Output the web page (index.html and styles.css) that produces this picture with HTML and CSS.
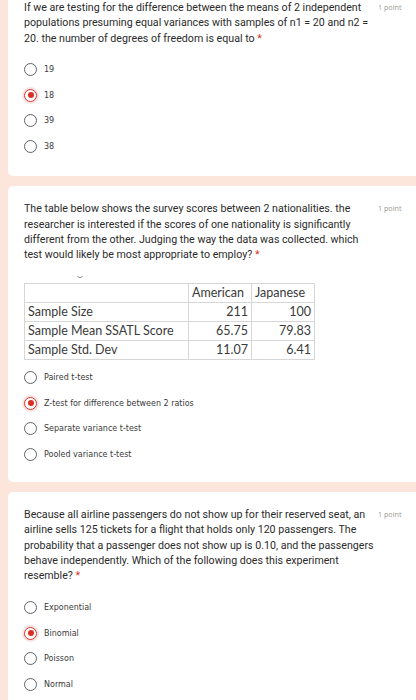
FILE: index.html
```html
<!DOCTYPE html>
<html lang="en">
<head>
<meta charset="utf-8">
<title>Quiz</title>
<link rel="stylesheet" href="styles.css">
</head>
<body>
<div class="page">
  <section class="card card-top">
    <div class="q-head">
      <p class="q-title">If we are testing for the difference between the means of 2 independent populations presuming equal variances with samples of n1 = 20 and n2 = 20. the number of degrees of freedom is equal to <span class="req">*</span></p>
      <span class="pts">1 point</span>
    </div>
    <ul class="opts">
      <li class="opt"><span class="radio"></span><span class="lbl">19</span></li>
      <li class="opt"><span class="radio on"></span><span class="lbl">18</span></li>
      <li class="opt"><span class="radio"></span><span class="lbl">39</span></li>
      <li class="opt"><span class="radio"></span><span class="lbl">38</span></li>
    </ul>
  </section>

  <section class="card">
    <div class="q-head">
      <p class="q-title">The table below shows the survey scores between 2 nationalities. the researcher is interested if the scores of one nationality is significantly different from the other. Judging the way the data was collected. which test would likely be most appropriate to employ? <span class="req">*</span></p>
      <span class="pts">1 point</span>
    </div>
    <div class="caret"><svg width="6" height="3" viewBox="0 0 6 3"><path d="M0.5 0.5 Q3 3 5.5 0.5" fill="none" stroke="#8a8a8a" stroke-width="1"/></svg></div>
    <table class="data">
      <colgroup><col class="c1"><col class="c2"><col class="c3"></colgroup>
      <tr><td></td><td>American</td><td>Japanese</td></tr>
      <tr><td>Sample Size</td><td class="num">211</td><td class="num">100</td></tr>
      <tr><td>Sample Mean SSATL Score</td><td class="num">65.75</td><td class="num">79.83</td></tr>
      <tr><td>Sample Std. Dev</td><td class="num">11.07</td><td class="num">6.41</td></tr>
    </table>
    <ul class="opts opts-tight">
      <li class="opt"><span class="radio"></span><span class="lbl">Paired t-test</span></li>
      <li class="opt"><span class="radio on"></span><span class="lbl">Z-test for difference between 2 ratios</span></li>
      <li class="opt"><span class="radio"></span><span class="lbl">Separate variance t-test</span></li>
      <li class="opt"><span class="radio"></span><span class="lbl">Pooled variance t-test</span></li>
    </ul>
  </section>

  <section class="card">
    <div class="q-head">
      <p class="q-title">Because all airline passengers do not show up for their reserved seat, an airline sells 125 tickets for a flight that holds only 120 passengers. The probability that a passenger does not show up is 0.10, and the passengers behave independently. Which of the following does this experiment resemble? <span class="req">*</span></p>
      <span class="pts">1 point</span>
    </div>
    <ul class="opts">
      <li class="opt"><span class="radio"></span><span class="lbl">Exponential</span></li>
      <li class="opt"><span class="radio on"></span><span class="lbl">Binomial</span></li>
      <li class="opt"><span class="radio"></span><span class="lbl">Poisson</span></li>
      <li class="opt"><span class="radio"></span><span class="lbl">Normal</span></li>
    </ul>
  </section>
</div>
</body>
</html>
```

FILE: styles.css
```css
html, body {
  margin: 0;
  padding: 0;
  background: #fce6db;
  overflow: hidden;
}

.page {
  padding-left: 8px;
  margin-top: -15px;
}

.card {
  background: #ffffff;
  border-radius: 5px 0 0 5px;
  padding: 15px 0 15px 16px;
  margin-bottom: 10px;
}

.card-top {
  padding-bottom: 17px;
}

.q-head {
  display: flex;
  align-items: flex-start;
}

.q-title {
  margin: 0;
  width: 354px;
  flex: none;
  font-family: Roboto, "Liberation Sans", sans-serif;
  font-size: 10.65px;
  line-height: 15.4px;
  color: #2b2b2b;
}

.req {
  color: #d93025;
}

.pts {
  font-family: "Open Sans", Roboto, sans-serif;
  font-size: 7.2px;
  line-height: 15.4px;
  color: #9a9a9a;
  white-space: nowrap;
}

.opts {
  list-style: none;
  margin: 11px 0 0;
  padding: 0;
}

.opts-tight {
  margin-top: 5px;
}

.opt {
  display: flex;
  align-items: center;
  gap: 7px;
  height: 25.5px;
}

.radio {
  width: 13px;
  height: 13px;
  box-sizing: border-box;
  border: 1.4px solid #5f6368;
  border-radius: 50%;
  display: flex;
  align-items: center;
  justify-content: center;
  flex: none;
}

.radio.on {
  border-color: #d93025;
  box-shadow: 0 0 0 2px rgba(217, 48, 37, 0.13);
}

.radio.on::after {
  content: "";
  width: 6px;
  height: 6px;
  border-radius: 50%;
  background: #d93025;
}

.lbl {
  font-family: "DejaVu Sans", sans-serif;
  font-size: 8px;
  color: #3a3a3a;
}

.caret {
  height: 20px;
  box-sizing: border-box;
  padding: 0 0 4px 53px;
  display: flex;
  align-items: flex-end;
}

.caret svg {
  display: block;
}

.data {
  border-collapse: collapse;
  font-family: Lato, "Liberation Sans", sans-serif;
  font-size: 12.5px;
  color: #3a3a3a;
  table-layout: fixed;
}

.c1 { width: 164px; }
.c2 { width: 63px; }
.c3 { width: 63px; }

.data td {
  border: 1px solid #d6d6d6;
  height: 19px;
  padding: 0 3px;
  box-sizing: border-box;
  white-space: nowrap;
  line-height: 17px;
}

.data td.num {
  text-align: right;
}
```
